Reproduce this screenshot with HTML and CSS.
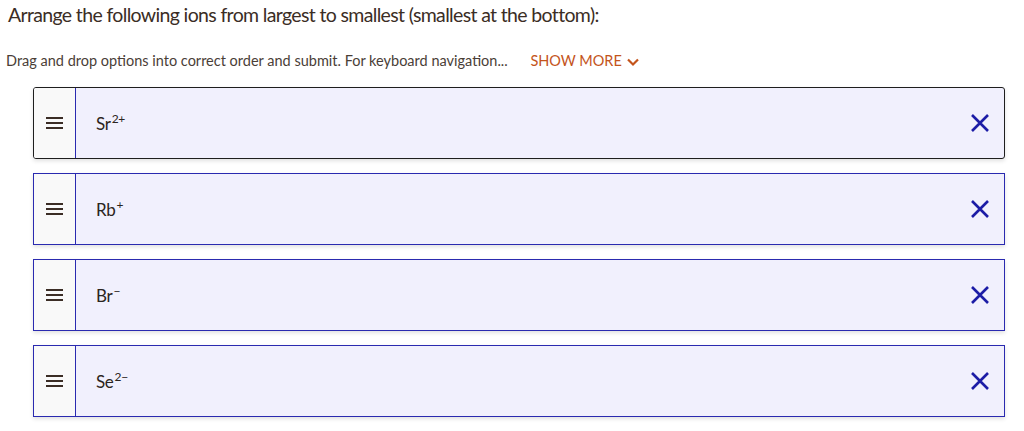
FILE: index.html
```html
<!DOCTYPE html>
<html lang="en">
<head>
  <meta charset="UTF-8">
  <title>Ordering question</title>
  <link rel="stylesheet" href="styles.css">
</head>
<body>
  <div class="question">
    <p class="prompt">Arrange the following ions from largest to smallest (smallest at the bottom):</p>
    <p class="hint">Drag and drop options into correct order and submit. For keyboard navigation... <a class="more" href="#">SHOW MORE <svg width="14" height="10" viewBox="0 0 14 10"><path d="M2 2.5 L7 7.5 L12 2.5" fill="none" stroke="currentColor" stroke-width="2.2"/></svg></a></p>

    <ul class="order-list">
      <li class="item active">
        <div class="handle"><span class="bars"></span></div>
        <div class="label"><span>Sr<sup>2+</sup></span></div>
        <button class="remove" aria-label="Remove"><svg width="20" height="20" viewBox="0 0 20 20"><path d="M2 2 L18 18 M18 2 L2 18" stroke="currentColor" stroke-width="2.6"/></svg></button>
      </li>
      <li class="item">
        <div class="handle"><span class="bars"></span></div>
        <div class="label"><span>Rb<sup>+</sup></span></div>
        <button class="remove" aria-label="Remove"><svg width="20" height="20" viewBox="0 0 20 20"><path d="M2 2 L18 18 M18 2 L2 18" stroke="currentColor" stroke-width="2.6"/></svg></button>
      </li>
      <li class="item">
        <div class="handle"><span class="bars"></span></div>
        <div class="label"><span>Br<sup>&minus;</sup></span></div>
        <button class="remove" aria-label="Remove"><svg width="20" height="20" viewBox="0 0 20 20"><path d="M2 2 L18 18 M18 2 L2 18" stroke="currentColor" stroke-width="2.6"/></svg></button>
      </li>
      <li class="item">
        <div class="handle"><span class="bars"></span></div>
        <div class="label"><span>Se<sup>2&minus;</sup></span></div>
        <button class="remove" aria-label="Remove"><svg width="20" height="20" viewBox="0 0 20 20"><path d="M2 2 L18 18 M18 2 L2 18" stroke="currentColor" stroke-width="2.6"/></svg></button>
      </li>
    </ul>
  </div>
</body>
</html>
```

FILE: styles.css
```css
* { box-sizing: border-box; }
body {
  margin: 0;
  background: #fff;
  font-family: Lato, "Open Sans", sans-serif;
  color: #3b2d25;
}
.question {
  padding: 0 19px 0 8px;
}
.prompt {
  margin: 0;
  padding-top: 2px;
  font-size: 19.5px;
  letter-spacing: -0.65px;
  line-height: 26px;
}
.hint {
  margin: 23px 0 0 -2px;
  font-size: 14.5px;
  line-height: 20px;
  color: #4a3e37;
}
.more {
  margin-left: 19px;
  color: #c4541b;
  text-decoration: none;
}
.more svg {
  vertical-align: -1px;
}
.order-list {
  list-style: none;
  margin: 16px 0 0 25px;
  padding: 0;
}
.item {
  display: flex;
  align-items: stretch;
  height: 72px;
  margin-bottom: 14px;
  border: 1.5px solid #2a2ab0;
  background: #f1f0fd;
  box-shadow: 0 2px 4px rgba(0,0,0,0.12);
}
.item.active {
  border-color: #1e1e1e;
  border-radius: 3px;
}
.handle {
  width: 42px;
  flex: none;
  background: #f9f9f9;
  border-right: 1.5px solid #2a2ab0;
  display: flex;
  align-items: center;
  justify-content: center;
}
.item.active .handle {
  border-radius: 2px 0 0 2px;
}
.bars {
  width: 17px;
  height: 12px;
  border-top: 2px solid #3b2d25;
  border-bottom: 2px solid #3b2d25;
  position: relative;
}
.bars::after {
  content: "";
  position: absolute;
  left: 0;
  right: 0;
  top: 3px;
  border-top: 2px solid #3b2d25;
}
.label {
  flex: 1;
  display: flex;
  align-items: center;
  padding-left: 20px;
  font-size: 17px;
  letter-spacing: -0.3px;
  color: #2b2420;
}
.label sup {
  font-size: 12px;
  line-height: 0;
  vertical-align: 7px;
  margin-left: 1px;
}
.remove {
  border: none;
  background: none;
  padding: 0 14px 0 0;
  width: 50px;
  display: flex;
  align-items: center;
  justify-content: flex-end;
  color: #1c1ca6;
}
```
